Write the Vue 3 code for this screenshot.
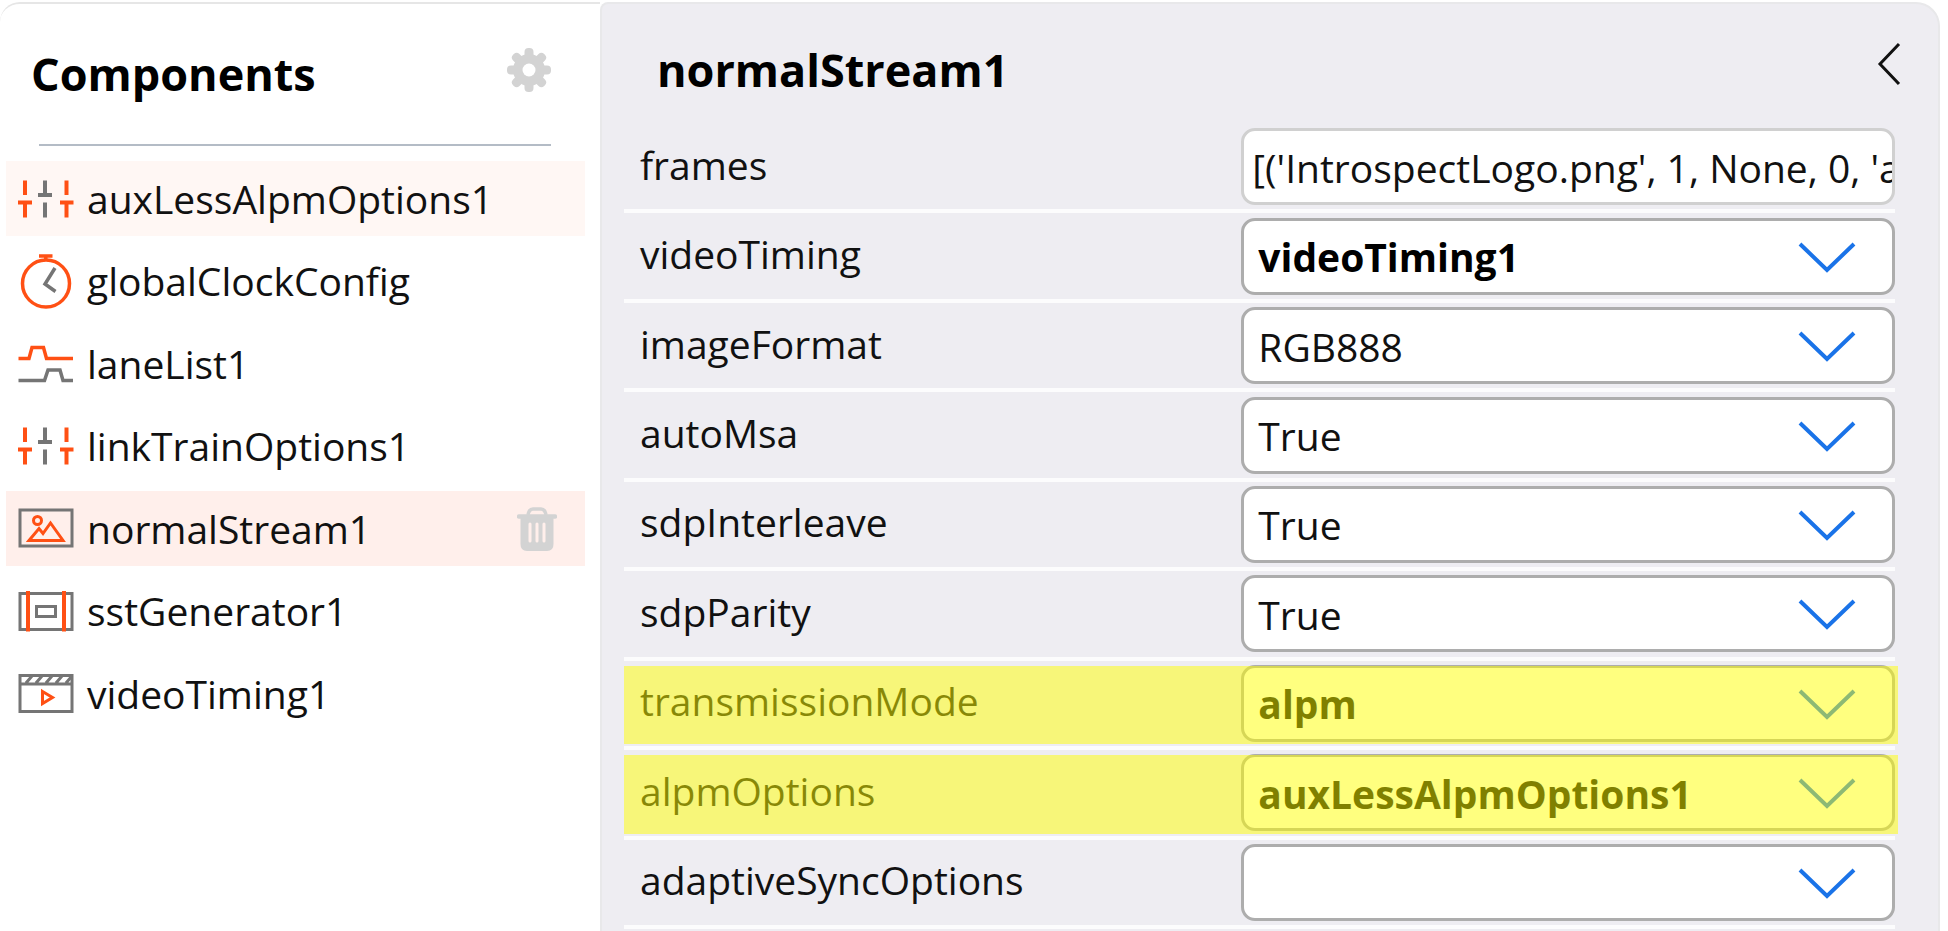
<template>
  <div class="workspace">
    <aside class="components">
      <header class="components-header">
        <h2>Components</h2>
        <button class="icon-button" aria-label="Settings">
          <svg class="gear" viewBox="0 0 44 44">
            <g fill="#d3d3d3">
              <rect
                v-for="angle in [0, 45, 90, 135]"
                :key="angle"
                x="17.5"
                y="0"
                width="9"
                height="44"
                rx="4"
                :transform="`rotate(${angle} 22 22)`"
              />
              <circle cx="22" cy="22" r="16" />
            </g>
            <circle cx="22" cy="22" r="6.5" fill="#fff" />
          </svg>
        </button>
      </header>

      <ul class="component-list">
        <li
          v-for="item in components"
          :key="item.name"
          class="component-item"
          :class="{ hovered: item.name === hovered, selected: item.name === selected }"
          @click="select(item)"
        >
          <svg class="item-icon" viewBox="0 0 56 56" fill="none">
            <g v-if="item.icon === 'options'" stroke-width="4">
              <path class="orange" d="M7 9.5V24M0 31.5H14M7 31.5V46.5M48.5 9.5V24M42 31.5H55.5M48.5 31.5V46.5" />
              <path class="gray" d="M27 9.5V23.5M20 24H34M27 31.5V46.5" />
            </g>
            <g v-else-if="item.icon === 'clock'" stroke-width="3.5">
              <circle class="orange" cx="28" cy="30.5" r="23.5" />
              <path class="orange" d="M21 3H34.5M27.8 3V7" />
              <path class="gray" d="M37 15L27 31L37.5 38.5" />
            </g>
            <g v-else-if="item.icon === 'lanes'" stroke-width="3.5">
              <path class="orange" d="M0.5 22.5H11L14 11.5H25.5L28.5 22.5H55" />
              <path class="gray" d="M0.5 44.5H26.5L30 34H42L45 44.5H55" />
            </g>
            <g v-else-if="item.icon === 'image'" stroke-width="3">
              <rect class="gray" x="2" y="9" width="52" height="36" />
              <circle class="orange" cx="19.5" cy="19.5" r="4" />
              <path class="orange" d="M11 39.5L21 27.5L25 32.5L32.5 22L45 39.5Z" />
            </g>
            <g v-else-if="item.icon === 'generator'" stroke-width="3">
              <rect class="gray" x="2" y="10.5" width="52" height="36" />
              <rect class="gray" x="18.5" y="23.5" width="19" height="10" />
              <path class="orange" stroke-width="4" d="M10 8V48.5M46 8V48.5" />
            </g>
            <g v-else stroke-width="3">
              <rect class="gray" x="2" y="9.5" width="52" height="36" />
              <path class="gray" d="M2 18H54M8 17L14 10M18 17L24 10M28 17L34 10M38 17L44 10M48 17L54 10" />
              <path class="orange" d="M24.5 25.5L34.5 31.5L24.5 37.5Z" />
            </g>
          </svg>
          <span class="item-name">{{ item.name }}</span>
          <button v-if="item.name === selected" class="icon-button" aria-label="Delete">
            <svg class="trash" viewBox="0 0 40 44" fill="none" stroke="#d3d3d3">
              <path d="M11 8Q12 2 16 2H24Q28 2 29 8" stroke-width="3.5" />
              <path d="M2 9.5H38" stroke-width="4.5" stroke-linecap="round" />
              <path d="M3.5 10H36.5V37Q36.5 44 30 44H10Q3.5 44 3.5 37Z" fill="#d3d3d3" stroke="none" />
              <path d="M13 17V34M20 17V34M27 17V34" stroke="#ffefeb" stroke-width="3" stroke-linecap="round" />
            </svg>
          </button>
        </li>
      </ul>
    </aside>

    <main class="properties">
      <header class="properties-header">
        <h2>{{ selected }}</h2>
        <button class="icon-button" aria-label="Collapse">
          <svg class="collapse" viewBox="0 0 24 44" fill="none">
            <path d="M22 2L3 22L22 42" stroke="#111" stroke-width="3" />
          </svg>
        </button>
      </header>

      <form class="property-list" @submit.prevent>
        <div
          v-for="prop in properties"
          :key="prop.name"
          class="property"
          :class="{ highlighted: prop.highlighted }"
        >
          <label :for="prop.name">{{ prop.name }}</label>
          <input v-if="prop.type === 'text'" :id="prop.name" v-model="prop.value" type="text" />
          <div v-else class="select-box">
            <select :id="prop.name" v-model="prop.value" :class="{ changed: prop.changed }">
              <option v-for="option in prop.options" :key="option" :value="option">{{ option }}</option>
            </select>
            <svg class="chevron" viewBox="0 0 58 32" fill="none">
              <path d="M2 2L29 28L56 2" stroke="#1a73e8" stroke-width="4" />
            </svg>
          </div>
        </div>
      </form>
    </main>
  </div>
</template>

<script setup>
import { ref } from 'vue'

const components = [
  { name: 'auxLessAlpmOptions1', icon: 'options' },
  { name: 'globalClockConfig', icon: 'clock' },
  { name: 'laneList1', icon: 'lanes' },
  { name: 'linkTrainOptions1', icon: 'options' },
  { name: 'normalStream1', icon: 'image' },
  { name: 'sstGenerator1', icon: 'generator' },
  { name: 'videoTiming1', icon: 'video' }
]

const selected = ref('normalStream1')
const hovered = ref('auxLessAlpmOptions1')

const properties = ref([
  { name: 'frames', type: 'text', value: "[('IntrospectLogo.png', 1, None, 0, 'auto')]" },
  { name: 'videoTiming', value: 'videoTiming1', options: ['videoTiming1'], changed: true },
  { name: 'imageFormat', value: 'RGB888', options: ['RGB888'] },
  { name: 'autoMsa', value: 'True', options: ['True', 'False'] },
  { name: 'sdpInterleave', value: 'True', options: ['True', 'False'] },
  { name: 'sdpParity', value: 'True', options: ['True', 'False'] },
  { name: 'transmissionMode', value: 'alpm', options: ['alpm'], changed: true, highlighted: true },
  {
    name: 'alpmOptions',
    value: 'auxLessAlpmOptions1',
    options: ['auxLessAlpmOptions1'],
    changed: true,
    highlighted: true
  },
  { name: 'adaptiveSyncOptions', value: '', options: [''] }
])

const select = (item) => {
  selected.value = item.name
}
</script>

<style>
body {
  margin: 0;
  background: #fff;
}
</style>

<style scoped>
.workspace {
  display: grid;
  grid-template-columns: 600px minmax(0, 1fr);
  min-height: 100vh;
  box-sizing: border-box;
  padding: 2px 8px 0 0;
  font-family: "Open Sans", "Noto Sans", sans-serif;
  font-size: 39px;
  line-height: 52px;
  color: #111;
}
h2 {
  margin: 0;
  font-size: 45px;
  line-height: 60px;
  font-weight: 700;
  color: #000;
}
.icon-button {
  display: flex;
  padding: 0;
  border: 0;
  background: none;
  cursor: pointer;
}
.components {
  box-sizing: border-box;
  border-top: 2px solid #e6e6e6;
  border-radius: 20px 0 0 0;
}
.components-header {
  display: flex;
  justify-content: space-between;
  align-items: flex-start;
  margin: 0 49px 15px 39px;
  padding-top: 40px;
  height: 100px;
  border-bottom: 2px solid #b4bcc6;
}
.components-header h2 {
  margin-left: -8px;
}
.gear {
  width: 44px;
  height: 44px;
  margin-top: 4px;
}
.component-list {
  display: flex;
  flex-direction: column;
  justify-content: space-between;
  height: 570px;
  margin: 0 15px 0 6px;
  padding: 0;
  list-style: none;
}
.component-item {
  display: flex;
  align-items: center;
  height: 75px;
  padding: 0 28px 0 12px;
  cursor: pointer;
}
.component-item.hovered {
  background: #fff7f4;
}
.component-item.selected {
  background: #ffefeb;
}
.item-icon {
  flex: none;
  width: 56px;
  height: 56px;
}
.item-name {
  flex: 1;
  margin-left: 13px;
}
.orange {
  stroke: #ff5014;
}
.gray {
  stroke: #757575;
}
.trash {
  width: 40px;
  height: 44px;
}
.properties {
  box-sizing: border-box;
  padding: 0 37px 0 22px;
  background: #eeedf2;
  border: 2px solid #e8e8ea;
  border-bottom: 0;
  border-radius: 8px 24px 0 0;
}
.properties-header {
  display: flex;
  justify-content: space-between;
  align-items: flex-start;
  height: 120px;
  box-sizing: border-box;
  padding: 36px 0 0 33px;
}
.collapse {
  width: 24px;
  height: 44px;
  margin-top: 2px;
}
.property-list {
  display: grid;
  grid-auto-rows: 1fr;
  height: 805px;
  margin-right: 6px;
}
.property {
  position: relative;
  display: grid;
  grid-template-columns: 17fr 18fr;
  align-items: center;
  border-bottom: 4px solid #fcfcfd;
}
.property label {
  padding: 0 0 4px 16px;
}
.property input,
.property select {
  width: 100%;
  height: 77px;
  box-sizing: border-box;
  border: 3px solid #adadad;
  border-radius: 14px;
  background: #fff;
  font: inherit;
  color: inherit;
}
.property input {
  padding: 2px 0 0 8px;
  border-color: #d0d0d0;
}
.property select {
  appearance: none;
  padding: 2px 100px 0 14px;
}
.property select.changed {
  font-weight: 700;
  color: #000;
}
.select-box {
  position: relative;
}
.chevron {
  position: absolute;
  top: 24px;
  right: 39px;
  width: 58px;
  height: 32px;
  pointer-events: none;
}
.property.highlighted::after {
  content: "";
  position: absolute;
  inset: 5px -3px 2px 0;
  background: rgba(255, 255, 0, 0.5);
  pointer-events: none;
}
</style>
